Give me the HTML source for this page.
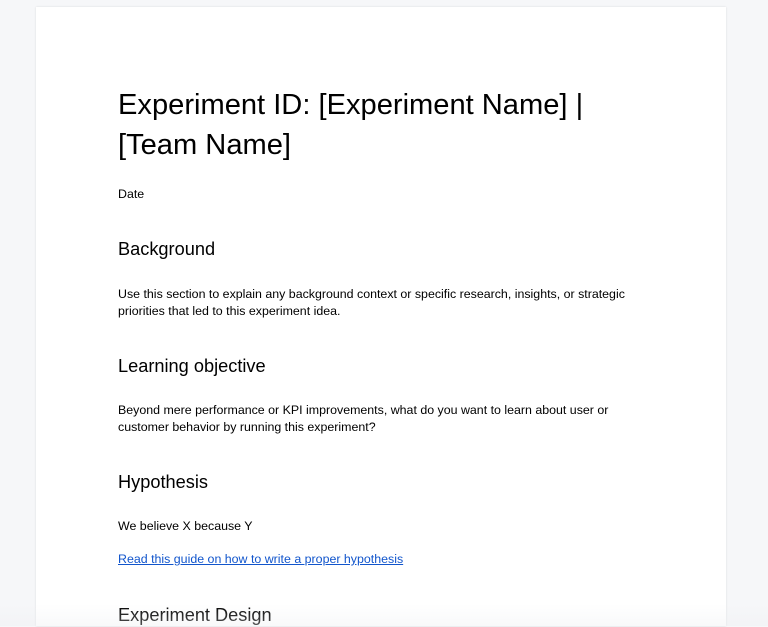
<!DOCTYPE html>
<html><head><meta charset="utf-8"><style>
html,body{margin:0;padding:0;}
body{width:768px;height:626px;background:#f6f7f9;position:relative;overflow:hidden;font-family:"Liberation Sans",Arial,sans-serif;color:#000;}
.page{position:absolute;left:36px;top:7px;width:690px;height:619px;background:#fff;box-shadow:0 0 2px rgba(0,0,0,.12);}
.t{position:absolute;left:118px;white-space:nowrap;}
.h1{font-size:29.1px;line-height:40px;}
.h2{font-size:18.2px;line-height:24px;}
.p{font-size:12.4px;line-height:17px;}
a{color:#1155cc;text-decoration:underline;}
.fade{position:absolute;left:0;top:604px;width:768px;height:22px;background:linear-gradient(rgba(240,241,243,0),rgba(236,237,240,.35));}
</style></head><body>
<div class="page"></div>
<div class="t h1" style="top:85px">Experiment ID: [Experiment Name] |</div>
<div class="t h1" style="top:125px">[Team Name]</div>
<div class="t p" style="top:186px">Date</div>
<div class="t h2" style="top:237px">Background</div>
<div class="t p" style="top:286px">Use this section to explain any background context or specific research, insights, or strategic</div>
<div class="t p" style="top:303px">priorities that led to this experiment idea.</div>
<div class="t h2" style="top:354px">Learning objective</div>
<div class="t p" style="top:402px">Beyond mere performance or KPI improvements, what do you want to learn about user or</div>
<div class="t p" style="top:419px">customer behavior by running this experiment?</div>
<div class="t h2" style="top:470px">Hypothesis</div>
<div class="t p" style="top:518px">We believe X because Y</div>
<div class="t p" style="top:551px"><a>Read this guide on how to write a proper hypothesis</a></div>
<div class="t h2" style="top:603px">Experiment Design</div>
<div class="fade"></div>
</body></html>
